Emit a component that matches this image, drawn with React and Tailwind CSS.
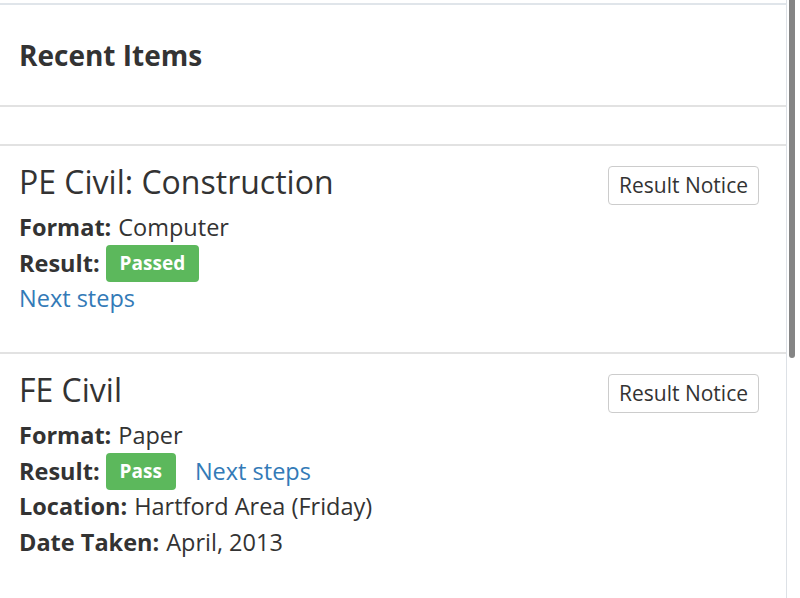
import React from "react";

const items = [
  {
    title: "PE Civil: Construction",
    format: "Computer",
    result: "Passed",
    inlineNext: false,
  },
  {
    title: "FE Civil",
    format: "Paper",
    result: "Pass",
    inlineNext: true,
    location: "Hartford Area (Friday)",
    date: "April, 2013",
  },
];

const Field = ({ label, children }) => (
  <div className="flex items-center h-[35.5px]">
    <span className="font-bold">{label}:</span>
    <span className="ml-[7px]">{children}</span>
  </div>
);

const Badge = ({ text }) => (
  <span className="inline-flex items-center h-[37px] px-[14px] rounded-[4px] bg-[#5cb85c] text-white font-bold text-[19px]">
    {text}
  </span>
);

const NextSteps = () => (
  <a href="#" className="text-[#337ab7]">Next steps</a>
);

export default function App() {
  return (
    <div
      className="w-[800px] h-[598px] flex bg-white overflow-hidden text-[#333]"
      style={{ fontFamily: "'Open Sans', 'Noto Sans', sans-serif" }}
    >
      <div className="w-[787px] border-r border-[#dde1e6] flex flex-col">
        <div className="mt-[3px] border-t-2 border-[#e0e5ea] h-[104px] shrink-0 flex items-center pl-[19px] border-b-2 border-b-[#e2e2e2]">
          <h2 className="text-[28px] font-bold">Recent Items</h2>
        </div>
        <div className="h-[39px] shrink-0 border-b-2 border-[#e2e2e2]" />
        {items.map((item, i) => (
          <div
            key={i}
            className={`shrink-0 border-b-2 border-[#e2e2e2] pl-[19px] pr-[27px] pt-[16px] flex justify-between items-start ${
              i === 0 ? "h-[208px]" : "h-[260px]"
            }`}
          >
            <div className="text-[23.5px]">
              <div className="text-[32px] leading-[40px] mb-[8px]">{item.title}</div>
              <Field label="Format">{item.format}</Field>
              <div className="flex items-center h-[35.5px]">
                <span className="font-bold">Result:</span>
                <span className="ml-[6px]">
                  <Badge text={item.result} />
                </span>
                {item.inlineNext && (
                  <span className="ml-[19px]">
                    <NextSteps />
                  </span>
                )}
              </div>
              {!item.inlineNext && (
                <div className="flex items-center h-[35.5px]">
                  <NextSteps />
                </div>
              )}
              {item.location && <Field label="Location">{item.location}</Field>}
              {item.date && <Field label="Date Taken">{item.date}</Field>}
            </div>
            <button className="mt-[4px] h-[39px] px-[10px] border border-[#ccc] rounded-[4px] text-[21px] text-[#333] bg-white">
              Result Notice
            </button>
          </div>
        ))}
      </div>
      <div className="w-[13px] flex">
        <div className="ml-[2px] w-[6px] h-[358px] bg-[#858585] rounded-b-[3px]" />
      </div>
    </div>
  );
}
